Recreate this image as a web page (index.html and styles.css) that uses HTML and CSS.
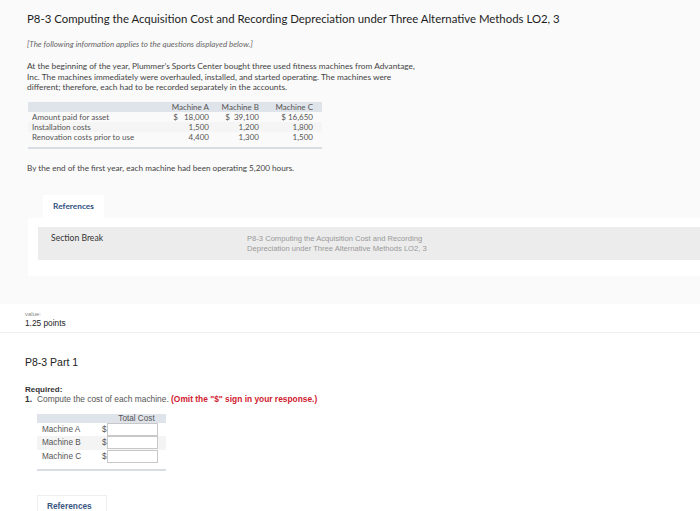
FILE: index.html
```html
<!DOCTYPE html>
<html>
<head>
<meta charset="utf-8">
<link rel="stylesheet" href="styles.css">
</head>
<body>
<div class="top">
  <h1 class="title">P8-3 Computing the Acquisition Cost and Recording Depreciation under Three Alternative Methods LO2, 3</h1>
  <p class="note">[The following information applies to the questions displayed below.]</p>
  <p class="intro">At the beginning of the year, Plummer’s Sports Center bought three used fitness machines from Advantage, Inc. The machines immediately were overhauled, installed, and started operating. The machines were different; therefore, each had to be recorded separately in the accounts.</p>
  <table class="data">
    <colgroup><col class="w-lbl"><col class="w-a"><col class="w-b"><col class="w-c"></colgroup>
    <thead>
      <tr><th class="lbl"></th><th class="ca">Machine A</th><th class="cb">Machine B</th><th class="cc">Machine C</th></tr>
    </thead>
    <tbody>
      <tr><td class="lbl">Amount paid for asset</td><td class="ca"><span class="dl">$</span>18,000</td><td class="cb"><span class="dl2">$</span>39,100</td><td class="cc"><span class="dl3">$</span>16,650</td></tr>
      <tr class="alt"><td class="lbl">Installation costs</td><td class="ca">1,500</td><td class="cb">1,200</td><td class="cc">1,800</td></tr>
      <tr><td class="lbl">Renovation costs prior to use</td><td class="ca">4,400</td><td class="cb">1,300</td><td class="cc">1,500</td></tr>
    </tbody>
  </table>
  <div class="tbar"></div>
  <p class="after">By the end of the first year, each machine had been operating 5,200 hours.</p>
  <div class="tabs"><div class="tab">References</div></div>
  <div class="panel">
    <div class="sb">
      <div class="sb-label">Section Break</div>
      <div class="sb-text">P8-3 Computing the Acquisition Cost and Recording<br>Depreciation under Three Alternative Methods LO2, 3</div>
    </div>
  </div>
</div>
<div class="value">
  <div class="v-label">value:</div>
  <div class="v-pts">1.25 points</div>
</div>
<div class="question">
  <h2 class="part">P8-3 Part 1</h2>
  <div class="req">Required:</div>
  <div class="task"><b class="num">1.</b>Compute the cost of each machine. <b class="red">(Omit the "$" sign in your response.)</b></div>
  <table class="ans">
    <thead><tr><th></th><th></th><th class="tc">Total Cost</th></tr></thead>
    <tbody>
      <tr><td class="m">Machine A</td><td class="d">$</td><td class="in"><div class="box"></div></td></tr>
      <tr class="alt"><td class="m">Machine B</td><td class="d">$</td><td class="in"><div class="box"></div></td></tr>
      <tr><td class="m">Machine C</td><td class="d">$</td><td class="in"><div class="box"></div></td></tr>
    </tbody>
  </table>
  <div class="abar"></div>
  <div class="refbox">References</div>
</div>
</body>
</html>
```
FILE: styles.css
```css
html, body { margin: 0; padding: 0; }
body { background: #fff; font-family: Lato, "Open Sans", sans-serif; overflow: hidden; height: 511px; }
.top { background: #fafafa; padding: 12px 0 28px 27px; }
.title { margin: 0; font-size: 11.4px; font-weight: 400; color: #1e1e1e; line-height: 13px; }
.note { margin: 15px 0 0 0; font-size: 8px; font-style: italic; color: #666; line-height: 9px; }
.intro { margin: 12px 0 0 0; font-size: 8.3px; color: #444; line-height: 10.5px; width: 392px; }
.data { margin-top: 9px; border-collapse: collapse; table-layout: fixed; width: 294px; font-size: 8px; color: #555; margin-left: 1px; }
.w-lbl { width: 142px; }
.w-a { width: 44px; }
.w-b { width: 50px; }
.w-c { width: 58px; }
.data th { background: #dfe3ea; font-weight: 400; height: 10px; padding: 0; line-height: 10px; text-align: right; white-space: nowrap; }
.data td { padding: 0; height: 10px; line-height: 10px; text-align: right; white-space: nowrap; }
.data .lbl { text-align: left; padding-left: 4px; }
.data .ca { padding-right: 5px; }
.data .cb { padding-right: 5px; }
.data .cc { padding-right: 9px; }
.data tbody tr:last-child td { padding-bottom: 5px; }
.data .alt td { background: #f5f5f5; }
.dl { margin-right: 6px; }
.dl2 { margin-right: 4px; }
.dl3 { margin-right: 2px; }
.tbar { width: 294px; height: 2px; background: #d8dce3; margin-left: 1px; }
.after { margin: 14px 0 0 0; font-size: 8.2px; color: #444; line-height: 10px; }
.tabs { margin-top: 22px; padding-left: 16px; display: flex; }
.tab { width: 61px; height: 23px; background: #fff; color: #2f4f7f; font-size: 8.3px; font-weight: 700; display: flex; align-items: center; justify-content: center; box-sizing: border-box; }
.panel { background: #fff; margin-left: 1px; padding: 9px 0 16px 10px; }
.sb { background: #ececec; height: 33px; display: flex; padding: 6px 0 0 13px; box-sizing: border-box; }
.sb-label { width: 196px; font-size: 8.6px; color: #333; line-height: 11px; }
.sb-text { font-family: "Liberation Sans", Arial, sans-serif; font-size: 7.6px; color: #999; line-height: 10.5px; padding-top: 1px; }
.value { background: #fff; padding: 7px 0 0 25px; height: 29px; box-sizing: border-box; border-bottom: 1px solid #eee; font-family: "Liberation Sans", Arial, sans-serif; }
.v-label { font-size: 6px; color: #888; line-height: 7px; }
.v-pts { font-size: 8.3px; color: #222; line-height: 10px; }
.question { padding: 23px 0 0 25px; font-family: "Liberation Sans", Arial, sans-serif; }
.part { margin: 0; font-size: 10.5px; font-weight: 400; color: #222; line-height: 13px; }
.req { margin-top: 16px; font-size: 8px; font-weight: 700; color: #333; line-height: 9px; }
.task { font-size: 8.4px; color: #555; line-height: 10px; }
.num { color: #333; display: inline-block; width: 12px; }
.red { color: #d0202e; }
.ans { margin: 10px 0 0 12px; border-collapse: collapse; width: 129px; font-size: 8.2px; color: #555; }
.ans th { background: #dfe3ea; font-weight: 400; height: 9px; line-height: 9px; padding: 0; }
.ans th.tc { text-align: center; }
.ans td { padding: 0; height: 13.5px; }
.ans .m { width: 60px; padding-left: 5px; }
.ans .d { width: 5px; }
.ans .in { padding: 0 7px 0 0; }
.ans .alt td { background: #f4f4f4; }
.box { width: 51px; height: 13px; border: 1px solid #c8c8c8; background: #fff; box-sizing: border-box; }
.ans tbody tr:last-child td { padding-bottom: 6px; }
.abar { margin-left: 12px; width: 129px; height: 2px; background: #d8dce3; }
.refbox { margin: 24px 0 0 12px; width: 70px; height: 20px; border: 1px solid #eee; border-bottom: none; box-sizing: border-box; padding: 6px 0 0 9px; font-size: 8.3px; line-height: 9px; font-weight: 700; color: #3a5580; }
```
